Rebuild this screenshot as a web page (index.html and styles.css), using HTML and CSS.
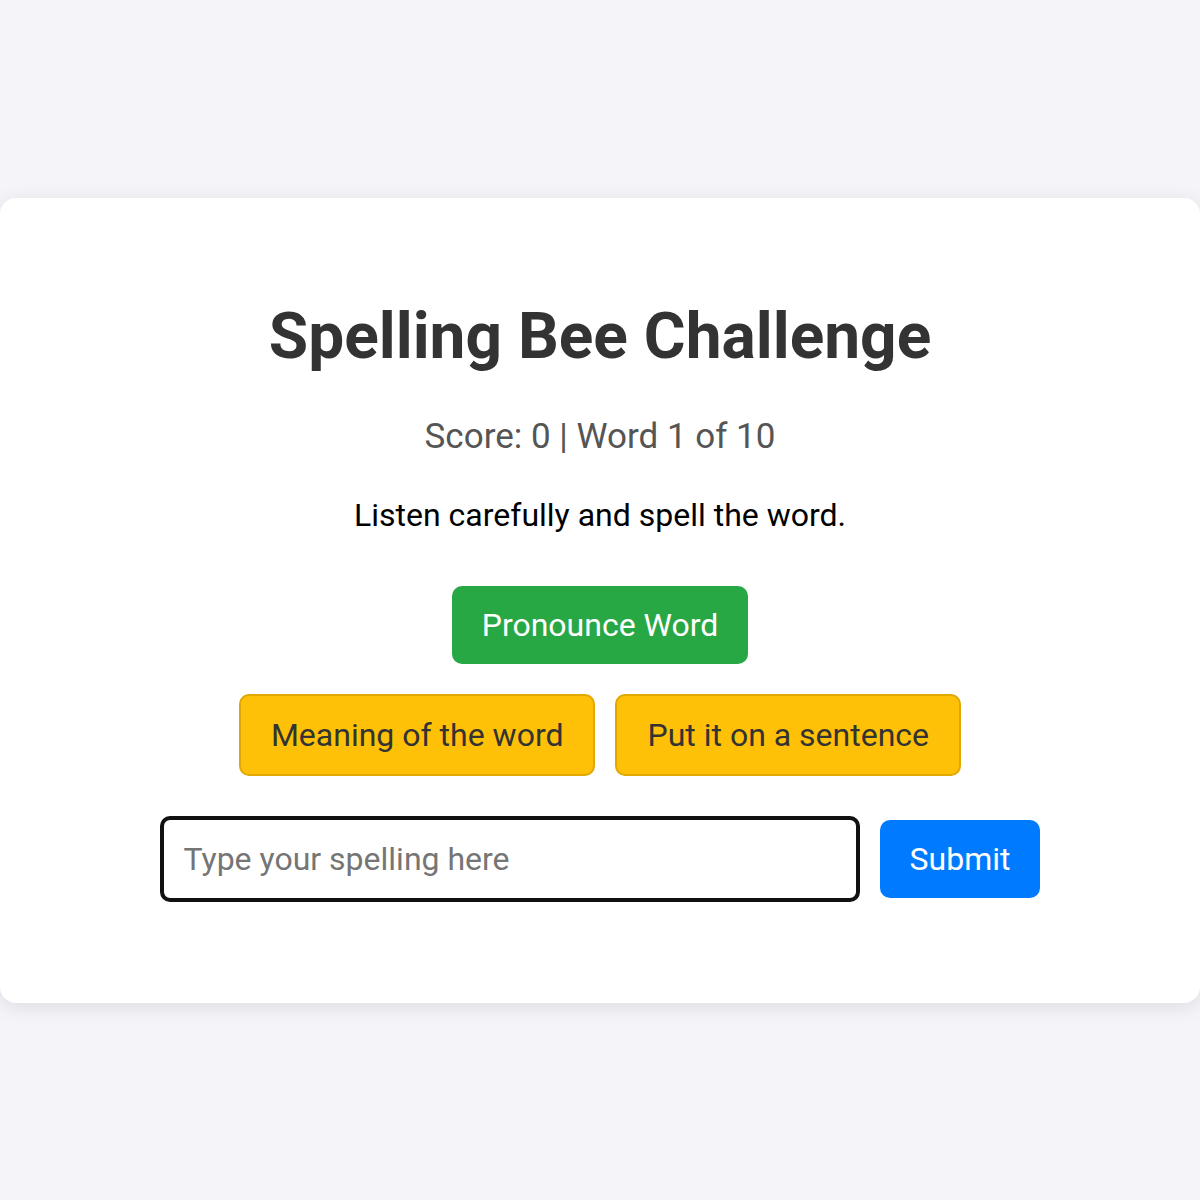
FILE: index.html
```html
<!DOCTYPE html>
<html lang="en">
<head>
    <meta charset="UTF-8">
    <meta name="viewport" content="width=device-width, initial-scale=1.0">
    <title>Spelling Bee Challenge</title>
    <link rel="stylesheet" href="styles.css">
</head>
<body>
    <div class="container">
        <h1>Spelling Bee Challenge</h1>
        <p class="score">Score: 0 | Word 1 of 10</p>
        <p class="message">Listen carefully and spell the word.</p>
        <div class="row">
            <button class="btn btn-green">Pronounce Word</button>
        </div>
        <div class="row hints">
            <button class="btn btn-yellow">Meaning of the word</button>
            <button class="btn btn-yellow">Put it on a sentence</button>
        </div>
        <div class="row answer">
            <input type="text" class="spell-input" placeholder="Type your spelling here" autofocus>
            <button class="btn btn-blue">Submit</button>
        </div>
    </div>
</body>
</html>
```

FILE: styles.css
```css
*{
    margin: 0;
    padding: 0;
    box-sizing: border-box;
}
body{
    font-family: Roboto, "Liberation Sans", sans-serif;
    background-color: #f4f4f9;
    min-height: 100vh;
    display: flex;
    align-items: center;
    justify-content: center;
}
.container{
    width: 100%;
    background-color: #fff;
    border-radius: 16px;
    box-shadow: 0 4px 20px rgba(0,0,0,0.1);
    padding: 101px 40px 101px;
    text-align: center;
}
h1{
    font-size: 64px;
    font-weight: 700;
    color: #333;
}
.score{
    font-size: 35px;
    color: #555;
    margin-top: 42px;
}
.message{
    font-size: 32px;
    color: #000;
    margin-top: 39px;
}
.row{
    display: flex;
    justify-content: center;
    align-items: center;
    gap: 20px;
}
.btn{
    font-family: inherit;
    font-size: 32px;
    padding: 20px 30px;
    border: none;
    border-radius: 10px;
    color: #fff;
    cursor: pointer;
}
.btn-green{
    background-color: #28a745;
    margin-top: 52px;
}
.hints{
    margin-top: 30px;
}
.btn-yellow{
    background-color: #ffc107;
    border: 2px solid #e0a800;
    color: #333;
}
.answer{
    margin-top: 40px;
}
.spell-input{
    width: 700px;
    font-family: inherit;
    font-size: 32px;
    padding: 20px;
    border: 4px solid #111;
    border-radius: 10px;
    outline: none;
    caret-color: #000;
}
.spell-input::placeholder{
    color: #757575;
}
.btn-blue{
    background-color: #007bff;
}
```
